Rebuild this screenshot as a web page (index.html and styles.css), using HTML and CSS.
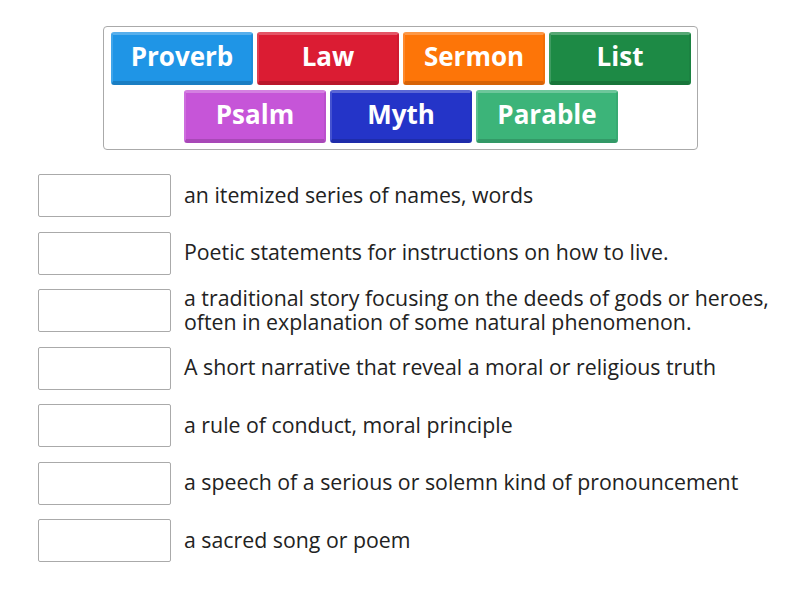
FILE: index.html
```html
<!DOCTYPE html>
<html lang="en">
<head>
  <meta charset="UTF-8">
  <title>Match up</title>
  <link rel="stylesheet" href="styles.css">
</head>
<body>
  <div class="bank">
    <div class="tile blue">Proverb</div>
    <div class="tile red">Law</div>
    <div class="tile orange">Sermon</div>
    <div class="tile green">List</div>
    <div class="tile pink">Psalm</div>
    <div class="tile navy">Myth</div>
    <div class="tile mint">Parable</div>
  </div>

  <div class="rows">
    <div class="row"><div class="slot"></div><div class="desc">an itemized series of names, words</div></div>
    <div class="row"><div class="slot"></div><div class="desc">Poetic statements for instructions on how to live.</div></div>
    <div class="row"><div class="slot"></div><div class="desc">a traditional story focusing on the deeds of gods or heroes, often in explanation of some natural phenomenon.</div></div>
    <div class="row"><div class="slot"></div><div class="desc">A short narrative that reveal a moral or religious truth</div></div>
    <div class="row"><div class="slot"></div><div class="desc">a rule of conduct, moral principle</div></div>
    <div class="row"><div class="slot"></div><div class="desc">a speech of a serious or solemn kind of pronouncement</div></div>
    <div class="row"><div class="slot"></div><div class="desc">a sacred song or poem</div></div>
  </div>
</body>
</html>
```

FILE: styles.css
```css
body {
  margin: 0;
  background: #fff;
  font-family: "Open Sans", "Liberation Sans", sans-serif;
  color: #222;
}

.bank {
  width: 582px;
  margin: 26px 0 0 103px;
  padding: 5px 5px 6px 6px;
  border: 1px solid #aaa;
  border-radius: 4px;
  display: flex;
  flex-wrap: wrap;
  justify-content: center;
  gap: 5px 4px;
}

.tile {
  box-sizing: border-box;
  width: 142px;
  height: 53px;
  border-radius: 3px;
  border-top: 3px solid rgba(255, 255, 255, 0.25);
  border-left: 2px solid rgba(255, 255, 255, 0.15);
  border-right: 2px solid rgba(0, 0, 0, 0.05);
  border-bottom: 4px solid rgba(0, 0, 0, 0.15);
  color: #fff;
  font-weight: bold;
  font-size: 26px;
  display: flex;
  align-items: center;
  justify-content: center;
  padding-bottom: 4px;
}

.blue { background-color: #1f95e6; }
.red { background-color: #db1c33; }
.orange { background-color: #fd7508; }
.green { background-color: #1d8a45; }
.pink { background-color: #c655d8; }
.navy { background-color: #2434c8; }
.mint { background-color: #3cb479; }

.rows {
  margin: 24px 0 0 38px;
  display: flex;
  flex-direction: column;
  gap: 14.5px;
}

.row {
  display: flex;
  align-items: center;
  gap: 13px;
  height: 43px;
}

.slot {
  flex: none;
  box-sizing: border-box;
  width: 133px;
  height: 43px;
  border: 1px solid #aaa;
  border-radius: 2px;
}

.desc {
  font-size: 21.3px;
  line-height: 24px;
  width: 600px;
  padding-bottom: 2px;
}
```
